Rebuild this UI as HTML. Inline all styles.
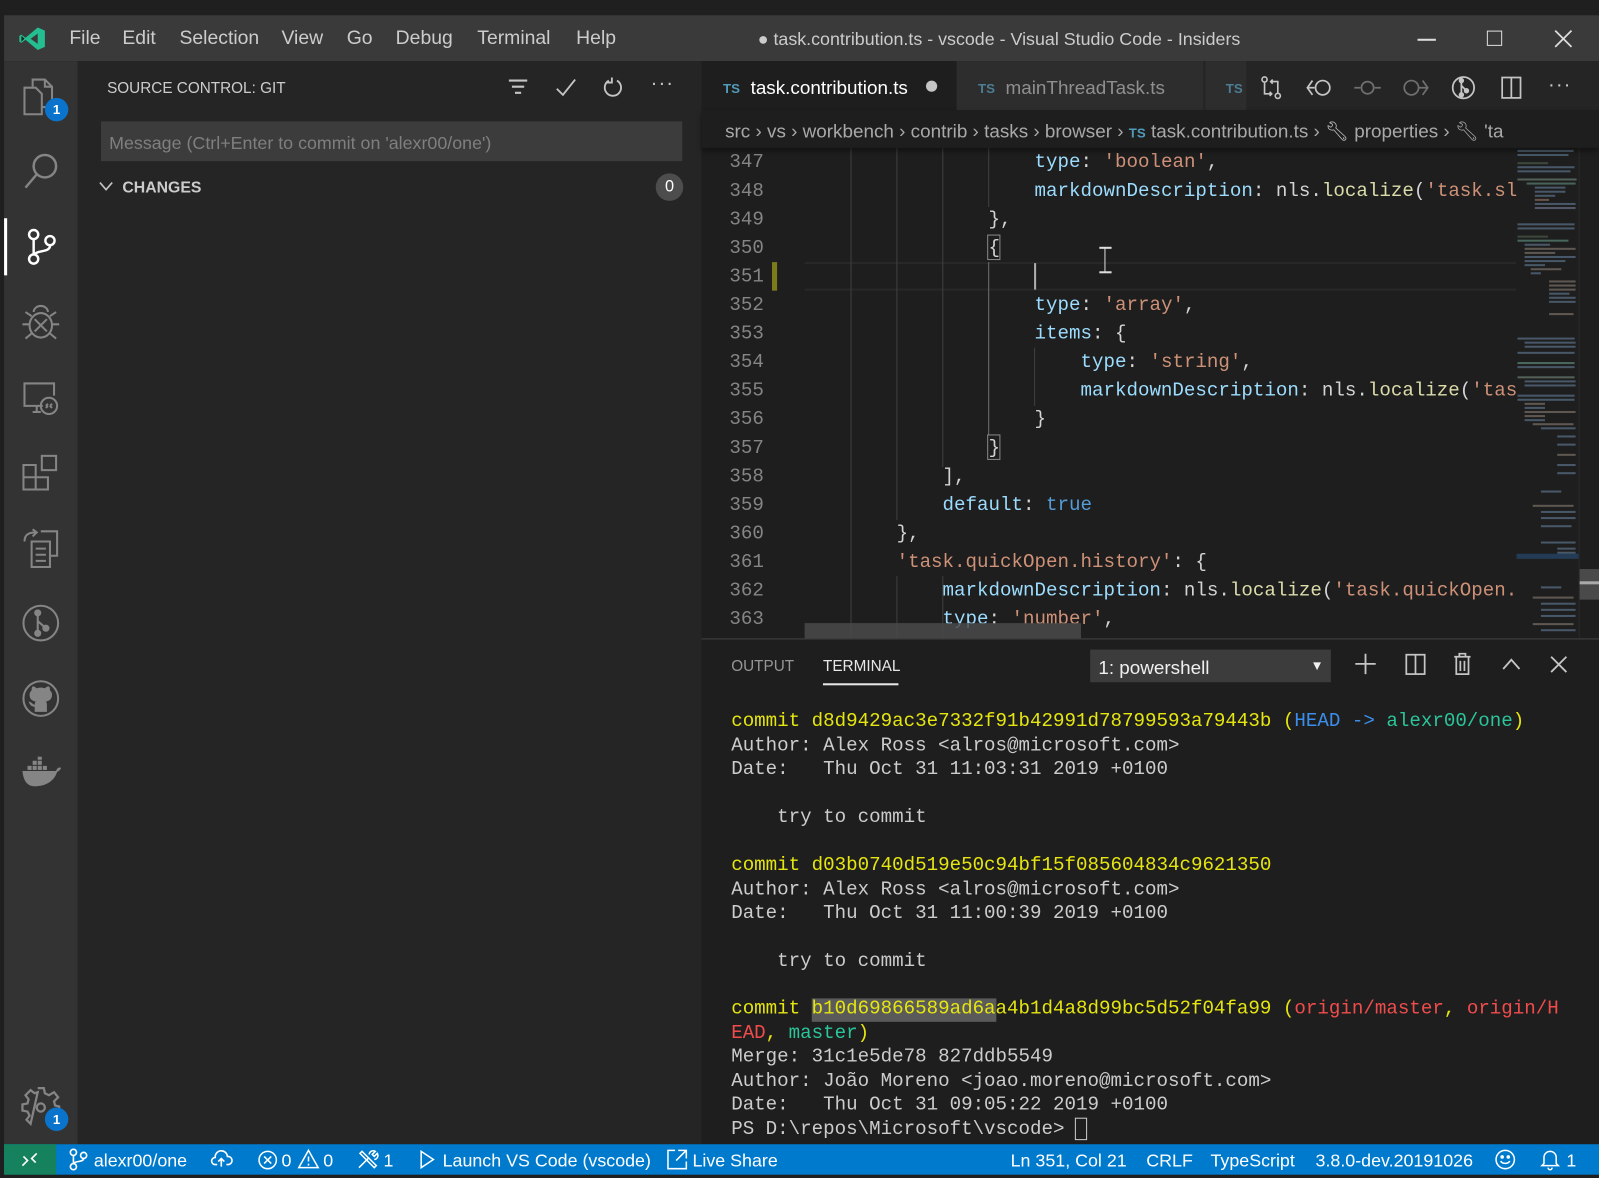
<!DOCTYPE html>
<html><head><meta charset="utf-8"><style>
*{margin:0;padding:0;box-sizing:border-box}
html,body{width:1599px;height:1178px;overflow:hidden;background:#1f1f1f}
#w{position:absolute;left:0;top:0;width:1568px;height:1155px;transform:scale(1.0198);transform-origin:0 0;font-family:"Liberation Sans",sans-serif;color:#ccc}
.a{position:absolute}
.ui{font-family:"Liberation Sans",sans-serif;white-space:nowrap}
.m{font-family:"Liberation Mono",monospace;font-size:18.8px;white-space:pre}
.k{color:#9cdcfe}.s{color:#ce9178}.f{color:#dcdcaa}.b{color:#569cd6}.p{color:#d4d4d4}
.ln{position:absolute;left:700px;width:49px;text-align:right;color:#858585;font-family:"Liberation Mono",monospace;font-size:18.8px;line-height:28px}
.cl{position:absolute;left:789px;line-height:28px}
.t{position:absolute;left:717px;line-height:23.5px;color:#cccccc}
.y{color:#e5e510}.bl{color:#3b8eea}.g{color:#23d18b}.r{color:#f14c4c}
svg{position:absolute;overflow:visible}
.mm div{position:absolute;height:2px;opacity:.7}
.sb{position:absolute;top:1128px;font-size:17.5px;color:#fff;font-family:"Liberation Sans",sans-serif;white-space:nowrap}
</style></head><body><div id="w">
<!-- title bar -->
<div class="a" style="left:4px;top:15px;width:1564px;height:45px;background:#3a3a3a"></div>
<svg style="left:19px;top:26px" width="26" height="24" viewBox="0 0 26 24"><path d="M18 1 L25 4 V20 L18 23 L6 13 L2 16 L0 15 V9 L2 8 L6 11 Z M18 7 L11 12 L18 17 Z" fill="#24bf91"/><path d="M2 9 V15 L5 12 Z" fill="#1e1e1e"/></svg>
<div class="a ui" style="left:68px;top:27px;font-size:19px;color:#cccccc">File</div>
<div class="a ui" style="left:120px;top:27px;font-size:19px">Edit</div>
<div class="a ui" style="left:176px;top:27px;font-size:19px">Selection</div>
<div class="a ui" style="left:276px;top:27px;font-size:19px">View</div>
<div class="a ui" style="left:340px;top:27px;font-size:19px">Go</div>
<div class="a ui" style="left:388px;top:27px;font-size:19px">Debug</div>
<div class="a ui" style="left:468px;top:27px;font-size:19px">Terminal</div>
<div class="a ui" style="left:565px;top:27px;font-size:19px">Help</div>
<div class="a ui" style="left:743px;top:28px;font-size:17.5px;color:#cccccc">● task.contribution.ts - vscode - Visual Studio Code - Insiders</div>
<div class="a" style="left:1390px;top:38px;width:18px;height:1.5px;background:#ddd"></div>
<div class="a" style="left:1458px;top:30px;width:15px;height:15px;border:1.5px solid #ddd"></div>
<svg style="left:1525px;top:30px" width="16" height="16"><path d="M0 0L16 16M16 0L0 16" stroke="#ddd" stroke-width="1.7"/></svg>

<!-- activity bar -->
<div class="a" style="left:4px;top:60px;width:72px;height:1062px;background:#333333"></div>
<div class="a" style="left:4px;top:214px;width:3px;height:56px;background:#fff"></div>
<svg style="left:22px;top:77px" width="36" height="36" fill="none" stroke="#858585" stroke-width="2"><path d="M10 8V1H22L29 8V28H19"/><path d="M22 1V8H29"/><path d="M2 9H13L19 15V35H2Z"/></svg>
<div class="a ui" style="left:44px;top:96px;width:23px;height:23px;border-radius:50%;background:#0a74cc;color:#fff;font-size:13px;font-weight:bold;text-align:center;line-height:23px">1</div>
<svg style="left:23px;top:150px" width="36" height="36" fill="none" stroke="#858585" stroke-width="2.4"><circle cx="21" cy="13" r="11"/><path d="M13 21L2 34"/></svg>
<svg style="left:25px;top:224px" width="30" height="36" fill="none" stroke="#fff" stroke-width="2.4"><circle cx="8" cy="6" r="4.5"/><circle cx="24" cy="12" r="4.5"/><circle cx="8" cy="30" r="4.5"/><path d="M8 11V25M24 17C24 24 10 21 9 26"/></svg>
<svg style="left:21px;top:298px" width="38" height="38" fill="none" stroke="#858585" stroke-width="2"><path d="M12 8A7 6 0 0 1 26 8"/><ellipse cx="19" cy="21" rx="11" ry="12"/><path d="M13 15L25 27M25 15L13 27M1 20H8M30 20H37M4 8L10 12M34 8L28 12M4 34L10 29M34 34L28 29"/></svg>
<svg style="left:22px;top:374px" width="38" height="36" fill="none" stroke="#858585" stroke-width="2"><path d="M20 24H2V2H31V14"/><path d="M10 30H18M14 24V30"/><circle cx="26" cy="24" r="8"/><path d="M23 24l2 -2M29 22l-2 2M23 26l2 -2M29 26l-2-2"/></svg>
<svg style="left:22px;top:446px" width="38" height="36" fill="none" stroke="#858585" stroke-width="2"><path d="M1 10H13V22H25V34H1ZM1 22H13V34"/><rect x="19" y="1" width="14" height="14"/></svg>
<svg style="left:22px;top:519px" width="38" height="38" fill="none" stroke="#858585" stroke-width="2"><path d="M2 12C2 4 8 3 14 3M10 0L14 3L10 7"/><path d="M18 2H34V26H28"/><path d="M9 12H27V37H9ZM13 19H23M13 25H23M13 31H23"/></svg>
<svg style="left:22px;top:592px" width="38" height="38" fill="none" stroke="#858585" stroke-width="2"><circle cx="18" cy="19" r="17"/><path d="M15 9V29M15 17L23 24"/><circle cx="15" cy="9" r="2.5" fill="#858585"/><circle cx="15" cy="29" r="2.5" fill="#858585"/><circle cx="23" cy="24" r="2.5" fill="#858585"/></svg>
<svg style="left:22px;top:666px" width="38" height="38"><circle cx="18" cy="19" r="17" fill="none" stroke="#858585" stroke-width="2"/><path d="M12 32V27C8 27 7 24 6 22C9 22 10 25 12 25C12 23 13 22 13 22C8 21 7 18 7 15C7 13 8 12 9 11C9 10 9 8 10 7C12 7 13 8 14 9C16 8 20 8 22 9C23 8 24 7 26 7C27 8 27 10 27 11C28 12 29 13 29 15C29 18 28 21 23 22C24 23 24 24 24 26V32Z" fill="#858585"/></svg>
<svg style="left:21px;top:742px" width="40" height="30"><path d="M1 14H34C35 11 37 10 39 11C38 13 37 14 35 15C32 24 24 29 13 29C6 29 2 24 1 14Z" fill="#858585"/><g fill="#858585"><rect x="6" y="9" width="4" height="4"/><rect x="11" y="9" width="4" height="4"/><rect x="16" y="9" width="4" height="4"/><rect x="21" y="9" width="4" height="4"/><rect x="11" y="4" width="4" height="4"/><rect x="16" y="4" width="4" height="4"/><rect x="16" y="0" width="4" height="3"/></g></svg>
<svg style="left:22px;top:1066px" width="36" height="36" fill="none" stroke="#858585" stroke-width="2.2"><path d="M15 1H21L22 6L26 8L31 5L35 10L31 14L32 18L36 19V25L31 26L29 30L32 34L28 36M8 36L4 32L7 28L5 24L0 23V17L5 16L6 12L3 8L8 3L12 6L15 5Z"/><circle cx="18" cy="20" r="4"/></svg>
<div class="a ui" style="left:44px;top:1086px;width:23px;height:23px;border-radius:50%;background:#0a74cc;color:#fff;font-size:13px;font-weight:bold;text-align:center;line-height:23px">1</div>

<!-- sidebar -->
<div class="a" style="left:76px;top:60px;width:612px;height:1062px;background:#252526"></div>
<div class="a ui" style="left:105px;top:78px;font-size:15px;color:#cccccc">SOURCE CONTROL: GIT</div>
<svg style="left:499px;top:77px" width="20" height="16" stroke="#c5c5c5" stroke-width="2"><path d="M0 2H18M3 8H15M6 14H12"/></svg>
<svg style="left:545px;top:77px" width="20" height="18" fill="none" stroke="#c5c5c5" stroke-width="1.8"><path d="M1 10L7 16L19 1"/></svg>
<svg style="left:591px;top:75px" width="20" height="22" fill="none" stroke="#c5c5c5" stroke-width="1.8"><path d="M6 4A8 8 0 1 0 14 4M9 1V6H4"/></svg>
<div class="a ui" style="left:638px;top:71px;font-size:20px;color:#c5c5c5;letter-spacing:1px">···</div>
<div class="a" style="left:99px;top:119px;width:570px;height:39px;background:#3c3c3c"></div>
<div class="a ui" style="left:107px;top:130px;font-size:17.5px;color:#7f7f7f">Message (Ctrl+Enter to commit on 'alexr00/one')</div>
<svg style="left:97px;top:178px" width="14" height="10" fill="none" stroke="#c5c5c5" stroke-width="1.6"><path d="M1 1L7 8L13 1"/></svg>
<div class="a ui" style="left:120px;top:176px;font-size:15.5px;font-weight:bold;color:#cccccc">CHANGES</div>
<div class="a ui" style="left:643px;top:170px;width:27px;height:27px;border-radius:50%;background:#4d4d4d;color:#fff;font-size:16px;text-align:center;line-height:27px">0</div>

<!-- tabs -->
<div class="a" style="left:688px;top:60px;width:880px;height:48px;background:#252526"></div>
<div class="a" style="left:688px;top:60px;width:250px;height:48px;background:#1e1e1e"></div>
<div class="a ui" style="left:709px;top:79px;font-size:13px;font-weight:bold;color:#519aba">TS</div>
<div class="a ui" style="left:736px;top:75px;font-size:18.5px;color:#ffffff">task.contribution.ts</div>
<div class="a" style="left:908px;top:79px;width:11px;height:11px;border-radius:50%;background:#c5c5c5"></div>
<div class="a" style="left:938px;top:60px;width:242px;height:48px;background:#2d2d2d"></div>
<div class="a ui" style="left:959px;top:79px;font-size:13px;font-weight:bold;color:#4d7d93">TS</div>
<div class="a ui" style="left:986px;top:75px;font-size:18.5px;color:#8f8f8f">mainThreadTask.ts</div>
<div class="a" style="left:1180px;top:60px;width:2px;height:48px;background:#252526"></div>
<div class="a" style="left:1182px;top:60px;width:40px;height:48px;background:#2d2d2d"></div>
<div class="a ui" style="left:1202px;top:79px;font-size:13px;font-weight:bold;color:#4d7d93">TS</div>
<svg style="left:1236px;top:75px" width="22" height="22" fill="none" stroke="#c5c5c5" stroke-width="1.6"><circle cx="4" cy="3" r="2.5"/><circle cx="17" cy="19" r="2.5"/><path d="M4 6V17H11M9 15L11 17L9 19M17 16V5H10M12 3L10 5L12 7"/></svg>
<svg style="left:1281px;top:77px" width="26" height="18" fill="none" stroke="#c5c5c5" stroke-width="1.7"><path d="M6 2L1 9L6 16"/><path d="M1 9H8"/><circle cx="16" cy="9" r="7"/></svg>
<svg style="left:1328px;top:78px" width="26" height="16" fill="none" stroke="#6f6f6f" stroke-width="1.7"><path d="M0 8H6M20 8H26"/><circle cx="13" cy="8" r="6"/></svg>
<svg style="left:1375px;top:77px" width="26" height="18" fill="none" stroke="#6f6f6f" stroke-width="1.7"><circle cx="9" cy="9" r="7"/><path d="M20 2L25 9L20 16M16 9H25"/></svg>
<svg style="left:1423px;top:74px" width="24" height="24" fill="none" stroke="#c5c5c5" stroke-width="1.7"><circle cx="12" cy="12" r="10.5"/><path d="M10 5V19M10 10L15 15"/><circle cx="10" cy="5" r="1.8" fill="#c5c5c5"/><circle cx="10" cy="19" r="1.8" fill="#c5c5c5"/><circle cx="15" cy="15" r="1.8" fill="#c5c5c5"/></svg>
<svg style="left:1472px;top:75px" width="20" height="22" fill="none" stroke="#c5c5c5" stroke-width="1.7"><rect x="1" y="1" width="18" height="20"/><path d="M10 1V21"/></svg>
<div class="a ui" style="left:1518px;top:72px;font-size:20px;color:#c5c5c5;letter-spacing:1px">···</div>

<!-- breadcrumbs -->
<div class="a" style="left:688px;top:108px;width:880px;height:37px;background:#1e1e1e;box-shadow:0 3px 5px #0006;z-index:2"></div>
<div class="a ui" style="left:711px;top:118px;font-size:18.5px;color:#a9a9a9;z-index:3">src <span>›</span> vs <span>›</span> workbench <span>›</span> contrib <span>›</span> tasks <span>›</span> browser <span>›</span> <b style="font-size:13px;color:#519aba">TS</b> task.contribution.ts <span>›</span> <span style="color:#c5c5c5">🔧︎</span> properties <span>›</span> 🔧︎ 'ta</div>

<!-- editor -->
<div class="a" style="left:688px;top:145px;width:880px;height:481px;background:#1e1e1e"></div>
<div class="a" style="left:789px;top:257px;width:698px;height:28px;border-top:2px solid #282828;border-bottom:2px solid #282828"></div>
<div class="a" style="left:757px;top:257px;width:5px;height:28px;background:#7b7b1c"></div>
<div class="a" style="left:834px;top:145px;width:1px;height:481px;background:#404040"></div>
<div class="a" style="left:879px;top:145px;width:1px;height:365px;background:#404040"></div>
<div class="a" style="left:879px;top:565px;width:1px;height:61px;background:#404040"></div>
<div class="a" style="left:924px;top:145px;width:1px;height:313px;background:#404040"></div>
<div class="a" style="left:924px;top:565px;width:1px;height:61px;background:#404040"></div>
<div class="a" style="left:969px;top:145px;width:1px;height:58px;background:#404040"></div>
<div class="a" style="left:969px;top:257px;width:1px;height:170px;background:#707070"></div>
<div class="a" style="left:1014px;top:341px;width:1px;height:57px;background:#404040"></div>
<div class="a" style="left:968px;top:230px;width:13px;height:25px;border:1px solid #888"></div>
<div class="a" style="left:968px;top:426px;width:13px;height:25px;border:1px solid #888"></div>
<div class="a" style="left:1014px;top:258px;width:2px;height:26px;background:#aeafad"></div>
<div class="a" style="left:1083px;top:243px;width:3px;height:24px;border-left:1.5px solid #ddd"></div>
<div class="a" style="left:1078px;top:242px;width:12px;height:1.5px;background:#ddd"></div>
<div class="a" style="left:1078px;top:266px;width:12px;height:1.5px;background:#ddd"></div>
<div class="a m" style="left:0;top:145px;width:1487px;height:481px;overflow:hidden">
<div class="ln" style="top:0">347</div><div class="ln" style="top:28px">348</div><div class="ln" style="top:56px">349</div><div class="ln" style="top:84px">350</div><div class="ln" style="top:112px">351</div><div class="ln" style="top:140px">352</div><div class="ln" style="top:168px">353</div><div class="ln" style="top:196px">354</div><div class="ln" style="top:224px">355</div><div class="ln" style="top:252px">356</div><div class="ln" style="top:280px">357</div><div class="ln" style="top:308px">358</div><div class="ln" style="top:336px">359</div><div class="ln" style="top:364px">360</div><div class="ln" style="top:392px">361</div><div class="ln" style="top:420px">362</div><div class="ln" style="top:448px">363</div>
<div class="cl" style="top:0">                    <span class="k">type</span><span class="p">: </span><span class="s">'boolean'</span><span class="p">,</span></div>
<div class="cl" style="top:28px">                    <span class="k">markdownDescription</span><span class="p">: nls.</span><span class="f">localize</span><span class="p">(</span><span class="s">'task.slowProviderWarning'</span></div>
<div class="cl p" style="top:56px">                },</div>
<div class="cl p" style="top:84px">                {</div>
<div class="cl" style="top:140px">                    <span class="k">type</span><span class="p">: </span><span class="s">'array'</span><span class="p">,</span></div>
<div class="cl" style="top:168px">                    <span class="k">items</span><span class="p">: {</span></div>
<div class="cl" style="top:196px">                        <span class="k">type</span><span class="p">: </span><span class="s">'string'</span><span class="p">,</span></div>
<div class="cl" style="top:224px">                        <span class="k">markdownDescription</span><span class="p">: nls.</span><span class="f">localize</span><span class="p">(</span><span class="s">'task.slowProvider'</span></div>
<div class="cl p" style="top:252px">                    }</div>
<div class="cl p" style="top:280px">                }</div>
<div class="cl p" style="top:308px">            ],</div>
<div class="cl" style="top:336px">            <span class="k">default</span><span class="p">: </span><span class="b">true</span></div>
<div class="cl p" style="top:364px">        },</div>
<div class="cl" style="top:392px">        <span class="s">'task.quickOpen.history'</span><span class="p">: {</span></div>
<div class="cl" style="top:420px">            <span class="k">markdownDescription</span><span class="p">: nls.</span><span class="f">localize</span><span class="p">(</span><span class="s">'task.quickOpen.history'</span></div>
<div class="cl" style="top:448px">            <span class="k">type</span><span class="p">: </span><span class="s">'number'</span><span class="p">,</span></div>
<div class="cl" style="top:476px">            <span class="k">default</span><span class="p">: </span><span class="b">30</span></div>
</div>
<div class="a" style="left:789px;top:611px;width:271px;height:15px;background:#4a4a4a;opacity:.85"></div>
<!-- minimap -->
<div class="a mm" style="left:1487px;top:145px;width:61px;height:481px;background:#1e1e1e;overflow:hidden">
<div style="left:1px;top:2px;width:55px;background:#5a7088"></div><div style="left:1px;top:6px;width:50px;background:#5a7088"></div>
<div style="left:1px;top:14px;width:30px;background:#4a5a4a"></div><div style="left:1px;top:18px;width:56px;background:#5a7088"></div><div style="left:1px;top:22px;width:52px;background:#5a7088"></div>
<div style="left:1px;top:30px;width:58px;background:#6a7c70"></div><div style="left:10px;top:34px;width:48px;background:#5a8070"></div><div style="left:18px;top:38px;width:30px;background:#5a7088"></div><div style="left:18px;top:42px;width:30px;background:#5a7088"></div><div style="left:18px;top:46px;width:20px;background:#5a7088"></div><div style="left:18px;top:50px;width:14px;background:#8a6a5a"></div><div style="left:18px;top:54px;width:40px;background:#5a7088"></div><div style="left:18px;top:58px;width:40px;background:#6a7088"></div>
<div style="left:1px;top:74px;width:56px;background:#5a7088"></div><div style="left:1px;top:78px;width:56px;background:#5a7088"></div>
<div style="left:1px;top:86px;width:30px;background:#4a5a4a"></div><div style="left:1px;top:90px;width:50px;background:#5a8878"></div><div style="left:8px;top:94px;width:25px;background:#5a7088"></div><div style="left:8px;top:98px;width:50px;background:#7a7068"></div><div style="left:8px;top:102px;width:30px;background:#7a7068"></div><div style="left:8px;top:106px;width:50px;background:#5a7088"></div><div style="left:8px;top:110px;width:40px;background:#5a7088"></div><div style="left:8px;top:114px;width:20px;background:#5a7088"></div><div style="left:14px;top:118px;width:30px;background:#7a7068"></div><div style="left:14px;top:122px;width:10px;background:#5a7088"></div>
<div style="left:32px;top:130px;width:26px;background:#7a7068"></div><div style="left:32px;top:134px;width:26px;background:#7a7068"></div><div style="left:32px;top:138px;width:26px;background:#7a7068"></div><div style="left:32px;top:142px;width:20px;background:#5a7088"></div><div style="left:32px;top:146px;width:26px;background:#5a7088"></div><div style="left:32px;top:150px;width:26px;background:#5a7088"></div><div style="left:32px;top:162px;width:24px;background:#7a7068"></div>
<div style="left:1px;top:186px;width:56px;background:#5a7088"></div><div style="left:8px;top:190px;width:50px;background:#5a7088"></div><div style="left:8px;top:194px;width:50px;background:#5a7088"></div><div style="left:1px;top:200px;width:56px;background:#5a7088"></div><div style="left:1px;top:210px;width:56px;background:#5a8878"></div><div style="left:1px;top:214px;width:56px;background:#5a7088"></div><div style="left:1px;top:224px;width:56px;background:#6a7c70"></div><div style="left:8px;top:228px;width:50px;background:#5a7088"></div><div style="left:8px;top:232px;width:50px;background:#5a7088"></div>
<div style="left:1px;top:242px;width:56px;background:#5a7088"></div><div style="left:1px;top:246px;width:56px;background:#5a7088"></div><div style="left:8px;top:250px;width:20px;background:#7a7068"></div><div style="left:8px;top:254px;width:20px;background:#5a7088"></div><div style="left:8px;top:258px;width:50px;background:#7a7068"></div><div style="left:8px;top:262px;width:20px;background:#7a7068"></div><div style="left:8px;top:266px;width:20px;background:#5a7088"></div><div style="left:16px;top:270px;width:40px;background:#7a7068"></div><div style="left:24px;top:274px;width:34px;background:#5a7088"></div>
<div style="left:40px;top:282px;width:18px;background:#5a7088"></div><div style="left:40px;top:290px;width:18px;background:#5a7088"></div><div style="left:40px;top:300px;width:18px;background:#7a7068"></div><div style="left:40px;top:310px;width:18px;background:#5a7088"></div><div style="left:40px;top:318px;width:18px;background:#5a7088"></div><div style="left:24px;top:336px;width:20px;background:#5a7088"></div><div style="left:16px;top:350px;width:40px;background:#7a7068"></div><div style="left:24px;top:356px;width:34px;background:#5a7088"></div><div style="left:24px;top:362px;width:34px;background:#5a7088"></div><div style="left:24px;top:370px;width:30px;background:#5a7088"></div><div style="left:24px;top:386px;width:34px;background:#5a7088"></div><div style="left:40px;top:392px;width:18px;background:#5a7088"></div><div style="left:40px;top:396px;width:18px;background:#5a7088"></div><div style="left:24px;top:430px;width:20px;background:#5a7088"></div>
<div style="left:16px;top:440px;width:40px;background:#7a7068"></div><div style="left:24px;top:446px;width:34px;background:#5a7088"></div><div style="left:24px;top:452px;width:34px;background:#5a7088"></div><div style="left:24px;top:458px;width:34px;background:#5a7088"></div><div style="left:16px;top:466px;width:40px;background:#7a7068"></div><div style="left:24px;top:472px;width:34px;background:#5a7088"></div>
<div style="left:0;top:398px;width:61px;height:5px;background:#264f78;opacity:.6"></div>
</div>
<div class="a" style="left:1548px;top:145px;width:20px;height:481px;background:#1e1e1e;border-left:1px solid #2a2a2a"></div>
<div class="a" style="left:1549px;top:558px;width:19px;height:30px;background:#4a4a4a"></div>
<div class="a" style="left:1549px;top:570px;width:19px;height:3px;background:#aaa"></div>

<!-- panel -->
<div class="a" style="left:688px;top:626px;width:880px;height:496px;background:#1e1e1e;border-top:1px solid #444"></div>
<div class="a ui" style="left:717px;top:645px;font-size:15px;color:#969696">OUTPUT</div>
<div class="a ui" style="left:807px;top:645px;font-size:15px;color:#e7e7e7">TERMINAL</div>
<div class="a" style="left:807px;top:670px;width:74px;height:2px;background:#e7e7e7"></div>
<div class="a" style="left:1069px;top:637px;width:236px;height:32px;background:#3c3c3c"></div>
<div class="a ui" style="left:1077px;top:644px;font-size:18.5px;color:#f0f0f0">1: powershell</div>
<div class="a ui" style="left:1285px;top:645px;font-size:13px;color:#f0f0f0">▼</div>
<svg style="left:1329px;top:641px" width="20" height="20" stroke="#c5c5c5" stroke-width="1.8"><path d="M10 0V20M0 10H20"/></svg>
<svg style="left:1378px;top:641px" width="20" height="22" fill="none" stroke="#c5c5c5" stroke-width="1.7"><rect x="1" y="1" width="18" height="19"/><path d="M10 1V20"/></svg>
<svg style="left:1425px;top:640px" width="18" height="22" fill="none" stroke="#c5c5c5" stroke-width="1.7"><path d="M1 4H17M6 4V1H12V4M3 4V21H15V4M7 8V18M11 8V18"/></svg>
<svg style="left:1473px;top:645px" width="18" height="12" fill="none" stroke="#c5c5c5" stroke-width="1.8"><path d="M1 11L9 2L17 11"/></svg>
<svg style="left:1521px;top:644px" width="15" height="15" stroke="#c5c5c5" stroke-width="1.8"><path d="M0 0L15 15M15 0L0 15"/></svg>
<div class="a" style="left:796px;top:979px;width:181px;height:23px;background:#5a5a5a"></div>
<div class="a m" style="left:0;top:696px;width:1568px;height:426px;overflow:hidden">
<div class="t" style="top:0"><span class="y">commit d8d9429ac3e7332f91b42991d78799593a79443b (</span><span class="bl">HEAD -&gt; </span><span class="g" style="color:#2bc59a">alexr00/one</span><span class="y">)</span></div>
<div class="t" style="top:23.5px">Author: Alex Ross &lt;alros@microsoft.com&gt;</div>
<div class="t" style="top:47px">Date:   Thu Oct 31 11:03:31 2019 +0100</div>
<div class="t" style="top:94px">    try to commit</div>
<div class="t y" style="top:141px">commit d03b0740d519e50c94bf15f085604834c9621350</div>
<div class="t" style="top:164.5px">Author: Alex Ross &lt;alros@microsoft.com&gt;</div>
<div class="t" style="top:188px">Date:   Thu Oct 31 11:00:39 2019 +0100</div>
<div class="t" style="top:235px">    try to commit</div>
<div class="t" style="top:282px"><span class="y">commit b10d69866589ad6aa4b1d4a8d99bc5d52f04fa99 (</span><span class="r">origin/master</span><span class="y">, </span><span class="r">origin/H</span></div>
<div class="t" style="top:305.5px"><span class="r">EAD</span><span class="y">, </span><span class="g" style="color:#2bc59a">master</span><span class="y">)</span></div>
<div class="t" style="top:329px">Merge: 31c1e5de78 827ddb5549</div>
<div class="t" style="top:352.5px">Author: João Moreno &lt;joao.moreno@microsoft.com&gt;</div>
<div class="t" style="top:376px">Date:   Thu Oct 31 09:05:22 2019 +0100</div>
<div class="t" style="top:399.5px">PS D:\repos\Microsoft\vscode&gt; </div>
</div>
<div class="a" style="left:1054px;top:1096px;width:12px;height:22px;border:1.5px solid #ccc"></div>

<!-- status bar -->
<div class="a" style="left:4px;top:1122px;width:1564px;height:30px;background:#007acc"></div>
<div class="a" style="left:4px;top:1122px;width:51px;height:30px;background:#16825d"></div>
<svg style="left:21px;top:1130px" width="16" height="14" fill="none" stroke="#fff" stroke-width="1.6"><path d="M1 13L6 8L2 4M15 1L10 6L14 10"/></svg>
<svg style="left:68px;top:1126px" width="18" height="22" fill="none" stroke="#fff" stroke-width="1.6"><circle cx="4" cy="4" r="3"/><circle cx="14" cy="7" r="3"/><circle cx="4" cy="18" r="3"/><path d="M4 7V15M14 10C14 14 5 12 5 15"/></svg>
<div class="sb" style="left:92px">alexr00/one</div>
<svg style="left:207px;top:1129px" width="22" height="16" fill="none" stroke="#fff" stroke-width="1.6"><path d="M6 13H4A3.5 3.5 0 0 1 4 6A6 6 0 0 1 16 5A4 4 0 0 1 17 13H15M10 15V7M7 10L10 7L13 10"/></svg>
<svg style="left:253px;top:1128px" width="19" height="19" fill="none" stroke="#fff" stroke-width="1.5"><circle cx="9.5" cy="9.5" r="8.5"/><path d="M6 6L13 13M13 6L6 13"/></svg>
<div class="sb" style="left:276px">0</div>
<svg style="left:292px;top:1127px" width="21" height="19" fill="none" stroke="#fff" stroke-width="1.5"><path d="M10.5 1L20 18H1Z M10.5 7V12M10.5 14V16"/></svg>
<div class="sb" style="left:317px">0</div>
<svg style="left:350px;top:1127px" width="22" height="20" fill="none" stroke="#fff" stroke-width="1.5"><path d="M2 18L12 8M5 2L19 16L17 18L3 4ZM12 5A4 4 0 0 1 18 2L15 5L17 7L20 4A4 4 0 0 1 17 10"/></svg>
<div class="sb" style="left:376px">1</div>
<svg style="left:412px;top:1128px" width="14" height="18" fill="none" stroke="#fff" stroke-width="1.5"><path d="M1 1L13 9L1 17Z"/></svg>
<div class="sb" style="left:434px">Launch VS Code (vscode)</div>
<svg style="left:654px;top:1127px" width="20" height="20" fill="none" stroke="#fff" stroke-width="1.5"><path d="M8 1H1V19H19V12M11 1H19V9M19 1L9 11"/></svg>
<div class="sb" style="left:679px">Live Share</div>
<div class="sb" style="left:991px">Ln 351, Col 21</div>
<div class="sb" style="left:1124px">CRLF</div>
<div class="sb" style="left:1187px">TypeScript</div>
<div class="sb" style="left:1290px">3.8.0-dev.20191026</div>
<svg style="left:1466px;top:1127px" width="20" height="20" fill="none" stroke="#fff" stroke-width="1.5"><circle cx="10" cy="10" r="9"/><path d="M5.5 11.5A5 4 0 0 0 14.5 11.5"/><circle cx="7" cy="7.5" r="1" fill="#fff"/><circle cx="13" cy="7.5" r="1" fill="#fff"/></svg>
<svg style="left:1511px;top:1126px" width="18" height="22" fill="none" stroke="#fff" stroke-width="1.5"><path d="M3 15V9A6 6 0 0 1 15 9V15L17 17H1ZM7 19A2 2 0 0 0 11 19"/></svg>
<div class="sb" style="left:1536px">1</div>
<div class="a" style="left:0;top:1152px;width:1568px;height:3px;background:#1f1f1f"></div>
</div></body></html>
